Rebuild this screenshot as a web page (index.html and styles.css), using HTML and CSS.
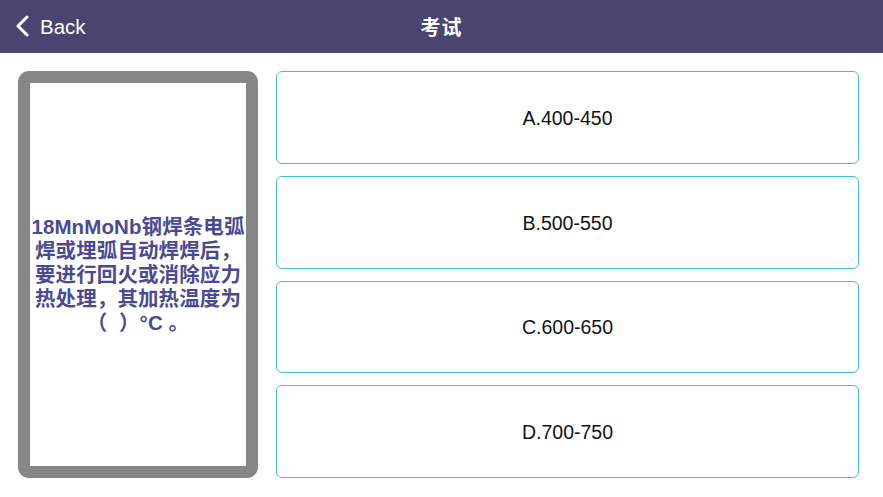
FILE: index.html
```html
<!DOCTYPE html>
<html lang="zh">
<head>
<meta charset="utf-8">
<title>考试</title>
<link rel="stylesheet" href="styles.css">
</head>
<body>
<header class="nav">
  <div class="back">
    <svg class="chev" width="14" height="22" viewBox="0 0 14 22"><path d="M12 2 L3 11 L12 20" fill="none" stroke="#fff" stroke-width="3" stroke-linecap="round" stroke-linejoin="round"/></svg>
    <span>Back</span>
  </div>
  <h1 class="title">考试</h1>
</header>
<main class="content">
  <section class="question">
    <p class="qtext">18MnMoNb钢焊条电弧<br>焊或埋弧自动焊焊后，<br>要进行回火或消除应力<br>热处理，其加热温度为<br>（&nbsp;&nbsp;）°C 。</p>
  </section>
  <section class="options">
    <div class="option">A.400-450</div>
    <div class="option">B.500-550</div>
    <div class="option">C.600-650</div>
    <div class="option">D.700-750</div>
  </section>
</main>
</body>
</html>
```
FILE: styles.css
```css
html, body {
  margin: 0;
  padding: 0;
  background: #ffffff;
  width: 883px;
  height: 497px;
  overflow: hidden;
}
body {
  font-family: "Liberation Sans", "Noto Sans CJK SC", sans-serif;
}
.nav {
  height: 53px;
  background: #4b4470;
  display: flex;
  align-items: center;
  justify-content: center;
  position: relative;
  color: #fff;
}
.back {
  position: absolute;
  left: 15px;
  top: 0;
  height: 53px;
  display: flex;
  align-items: center;
  gap: 11px;
  font-size: 20.5px;
}
.chev {
  display: block;
  margin-top: -1px;
}
.title {
  margin: 0;
  font-size: 20px;
  font-weight: bold;
  font-family: "Noto Sans CJK SC", sans-serif;
  letter-spacing: 1px;
}
.content {
  display: flex;
  gap: 18px;
  padding: 18px 24px 19px 18px;
  height: 407px;
}
.question {
  width: 216px;
  box-sizing: content-box;
  border: 12px solid #868686;
  border-radius: 11px;
  display: flex;
  align-items: center;
  justify-content: center;
}
.qtext {
  margin: 0;
  color: #4a4a94;
  font-family: "Liberation Sans", "Noto Sans CJK SC", sans-serif;
  font-weight: bold;
  font-size: 20.5px;
  line-height: 24px;
  text-align: center;
  white-space: nowrap;
  letter-spacing: 0.1px;
}
.options {
  flex: 1;
  display: flex;
  flex-direction: column;
  gap: 12px;
}
.option {
  flex: 1;
  border: 1.5px solid #3fbfd6;
  border-radius: 6px;
  display: flex;
  align-items: center;
  justify-content: center;
  font-size: 19.5px;
  color: #111;
  padding-top: 2px;
}
```
